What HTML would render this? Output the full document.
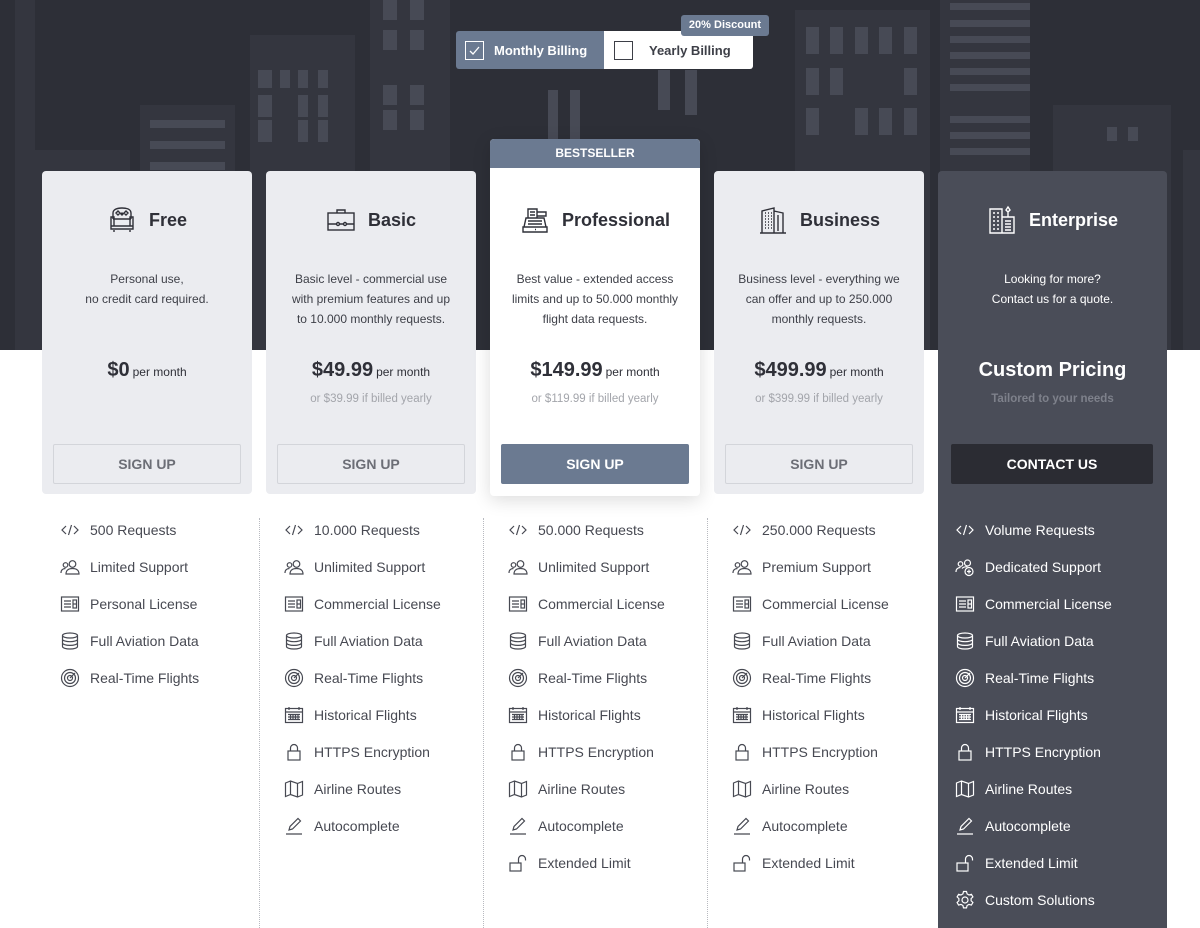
<!DOCTYPE html>
<html><head><meta charset="utf-8">
<style>
*{margin:0;padding:0;box-sizing:border-box}
body{width:1200px;height:928px;position:relative;overflow:hidden;background:#fff;font-family:"Liberation Sans","DejaVu Sans",sans-serif}
.bg{position:absolute;left:0;top:0;width:1200px;height:350px;background:#2d2f37;overflow:hidden}
.b{position:absolute;background:#34363f}
.w{position:absolute;background:#474a55}
.card{position:absolute;top:171px;width:210px;height:323px;background:#ebecf0;border-radius:4px;text-align:center;color:#2f3038}
.title{position:absolute;top:36px;left:0;right:0;height:26px;display:flex;justify-content:center;align-items:center;gap:12px;font-size:18px;font-weight:bold}
.title svg{width:30px;height:30px;fill:none;stroke:currentColor;stroke-width:1.4}
.desc{position:absolute;top:98px;left:8px;right:8px;font-size:12px;line-height:20px;color:#3d3f47}
.price{position:absolute;top:188px;left:0;right:0;font-size:20px;font-weight:bold}
.price small{font-size:12px;font-weight:normal;margin-left:3px}
.sub{position:absolute;top:222px;left:0;right:0;font-size:11.5px;color:#a3a5ab}
.btn{position:absolute;top:273px;left:11px;right:11px;height:40px;border:1px solid #d3d5da;border-radius:2px;font-size:14px;font-weight:bold;color:#6c6e76;line-height:38px}
.feat{position:absolute;top:511px;font-size:14px;color:#474952}
.feat div{height:37px;display:flex;align-items:center}
.feat svg{width:20px;height:20px;margin-right:10px;fill:none;stroke:currentColor;stroke-width:1.2}
.sep{position:absolute;top:518px;height:410px;border-left:1px dotted #b8bac0}
</style></head><body>
<svg width="0" height="0" style="position:absolute">
<defs>
<symbol id="code" viewBox="0 0 20 20"><path d="M6 6L2 10l4 4M14 6l4 4-4 4M11.5 5l-3 10"/></symbol>
<symbol id="users" viewBox="0 0 20 20"><circle cx="12.5" cy="7" r="3.3"/><path d="M6 17c0-4 3-5.5 6.5-5.5S19 13 19 17z"/><circle cx="5.5" cy="8" r="2.3"/><path d="M1 16c0-3 2-4.5 4.5-4.5"/></symbol>
<symbol id="lic" viewBox="0 0 20 20"><rect x="1.5" y="3" width="17" height="14"/><path d="M4 7h7M4 10h7M4 13h7"/><rect x="13" y="6" width="3.5" height="8"/><path d="M13 10h3.5"/></symbol>
<symbol id="db" viewBox="0 0 20 20"><ellipse cx="10" cy="4.5" rx="7.5" ry="2.5"/><path d="M2.5 4.5v11c0 1.4 3.4 2.5 7.5 2.5s7.5-1.1 7.5-2.5v-11M2.5 8.2c0 1.4 3.4 2.5 7.5 2.5s7.5-1.1 7.5-2.5M2.5 11.9c0 1.4 3.4 2.5 7.5 2.5s7.5-1.1 7.5-2.5"/></symbol>
<symbol id="radar" viewBox="0 0 20 20"><circle cx="10" cy="10" r="8.5"/><circle cx="10" cy="10" r="5.5"/><circle cx="10" cy="10" r="2.5"/><path d="M10 10l5-5"/></symbol>
<symbol id="cal" viewBox="0 0 20 20"><rect x="1.5" y="3.5" width="17" height="14"/><path d="M1.5 7h17M5 2v3M15 2v3M4 9.5h12M4 12h12M4 14.5h12M6.5 9v6M9 9v6M11.5 9v6M14 9v6"/></symbol>
<symbol id="lock" viewBox="0 0 20 20"><rect x="4" y="9" width="12" height="9"/><path d="M6.5 9V6a3.5 3.5 0 0 1 7 0v3"/></symbol>
<symbol id="map" viewBox="0 0 20 20"><path d="M1.5 4l5-2 7 2.5 5-2V16l-5 2-7-2.5-5 2zM6.5 2v13.5M13.5 4.5V18"/></symbol>
<symbol id="pen" viewBox="0 0 20 20"><path d="M5 14l1-3.5 8-8 2.5 2.5-8 8zM2 18h16"/></symbol>
<symbol id="unlock" viewBox="0 0 20 20"><rect x="2" y="10" width="11" height="8"/><path d="M10.5 10V6a3.5 3.5 0 0 1 7 0v1.5"/></symbol>
<symbol id="gear" viewBox="0 0 20 20"><circle cx="10" cy="10" r="3"/><path d="M8.5 1.5h3l.6 2.4 1.9 1.1 2.4-.7 1.5 2.6-1.8 1.7v2.2l1.8 1.7-1.5 2.6-2.4-.7-1.9 1.1-.6 2.4h-3l-.6-2.4-1.9-1.1-2.4.7-1.5-2.6 1.8-1.7V8.6L2.1 6.9l1.5-2.6 2.4.7 1.9-1.1z"/></symbol>
<symbol id="users2" viewBox="0 0 20 20"><circle cx="12.5" cy="6" r="3"/><circle cx="5.5" cy="7" r="2.3"/><path d="M1 15c0-3 2-4.5 4.5-4.5M7 11.5c1-1.2 3-1.8 5.5-1.8"/><circle cx="14" cy="14.5" r="4"/><path d="M14 12.5v4M12 14.5h4"/></symbol>
</defs></svg>

<div class="bg">
<div class="b" style="left:15px;top:0;width:20px;height:350px"></div>
<div class="b" style="left:30px;top:150px;width:100px;height:200px"></div>
<div class="b" style="left:140px;top:105px;width:95px;height:245px"></div>
<div class="w" style="left:150px;top:120px;width:75px;height:8px"></div>
<div class="w" style="left:150px;top:141px;width:75px;height:8px"></div>
<div class="w" style="left:150px;top:162px;width:75px;height:8px"></div>
<div class="b" style="left:250px;top:35px;width:105px;height:315px"></div>
<div class="w" style="left:258px;top:70px;width:14px;height:18px"></div><div class="w" style="left:280px;top:70px;width:10px;height:18px"></div><div class="w" style="left:298px;top:70px;width:10px;height:18px"></div><div class="w" style="left:318px;top:70px;width:10px;height:18px"></div>
<div class="w" style="left:258px;top:95px;width:14px;height:22px"></div><div class="w" style="left:298px;top:95px;width:10px;height:22px"></div><div class="w" style="left:318px;top:95px;width:10px;height:22px"></div>
<div class="w" style="left:258px;top:120px;width:14px;height:22px"></div><div class="w" style="left:298px;top:120px;width:10px;height:22px"></div><div class="w" style="left:318px;top:120px;width:10px;height:22px"></div>
<div class="b" style="left:370px;top:0;width:80px;height:350px"></div>
<div class="w" style="left:383px;top:0;width:14px;height:20px"></div><div class="w" style="left:410px;top:0;width:14px;height:20px"></div>
<div class="w" style="left:383px;top:30px;width:14px;height:20px"></div><div class="w" style="left:410px;top:30px;width:14px;height:20px"></div>
<div class="w" style="left:383px;top:85px;width:14px;height:20px"></div><div class="w" style="left:410px;top:85px;width:14px;height:20px"></div>
<div class="w" style="left:383px;top:110px;width:14px;height:20px"></div><div class="w" style="left:410px;top:110px;width:14px;height:20px"></div>
<div class="w" style="left:548px;top:90px;width:10px;height:60px"></div><div class="w" style="left:570px;top:90px;width:10px;height:60px"></div>
<div class="w" style="left:658px;top:70px;width:12px;height:40px"></div><div class="w" style="left:685px;top:70px;width:12px;height:45px"></div>
<div class="b" style="left:795px;top:10px;width:135px;height:340px"></div>
<div class="w" style="left:806px;top:27px;width:13px;height:27px"></div><div class="w" style="left:830px;top:27px;width:13px;height:27px"></div><div class="w" style="left:855px;top:27px;width:13px;height:27px"></div><div class="w" style="left:879px;top:27px;width:13px;height:27px"></div><div class="w" style="left:904px;top:27px;width:13px;height:27px"></div>
<div class="w" style="left:806px;top:68px;width:13px;height:27px"></div><div class="w" style="left:830px;top:68px;width:13px;height:27px"></div><div class="w" style="left:904px;top:68px;width:13px;height:27px"></div>
<div class="w" style="left:806px;top:108px;width:13px;height:27px"></div><div class="w" style="left:855px;top:108px;width:13px;height:27px"></div><div class="w" style="left:879px;top:108px;width:13px;height:27px"></div><div class="w" style="left:904px;top:108px;width:13px;height:27px"></div>
<div class="b" style="left:940px;top:0;width:90px;height:350px"></div>
<div class="w" style="left:950px;top:3px;width:80px;height:7px"></div><div class="w" style="left:950px;top:20px;width:80px;height:7px"></div><div class="w" style="left:950px;top:36px;width:80px;height:7px"></div><div class="w" style="left:950px;top:52px;width:80px;height:7px"></div><div class="w" style="left:950px;top:68px;width:80px;height:7px"></div><div class="w" style="left:950px;top:84px;width:80px;height:7px"></div><div class="w" style="left:950px;top:116px;width:80px;height:7px"></div><div class="w" style="left:950px;top:132px;width:80px;height:7px"></div><div class="w" style="left:950px;top:148px;width:80px;height:7px"></div>
<div class="b" style="left:1053px;top:105px;width:118px;height:245px"></div>
<div class="w" style="left:1107px;top:127px;width:10px;height:14px"></div><div class="w" style="left:1128px;top:127px;width:10px;height:14px"></div>
<div class="b" style="left:1183px;top:150px;width:17px;height:200px"></div>
</div>

<div style="position:absolute;left:456px;top:31px;width:148px;height:38px;background:#6b7a91;border-radius:3px 0 0 3px;color:#fff;font-size:13px;font-weight:bold;display:flex;align-items:center">
<div style="width:19px;height:19px;border:1px solid #fff;margin:0 10px 0 9px;display:flex;align-items:center;justify-content:center"><svg width="13" height="13" viewBox="0 0 13 13"><path d="M2 7l3 3 6-7" fill="none" stroke="#fff" stroke-width="1.3"/></svg></div>Monthly Billing</div>
<div style="position:absolute;left:604px;top:31px;width:149px;height:38px;background:#fff;border-radius:0 3px 3px 0;color:#3d3f47;font-size:13px;font-weight:bold;display:flex;align-items:center">
<div style="width:19px;height:19px;border:1px solid #3d3f47;margin:0 16px 0 10px"></div>Yearly Billing</div>
<div style="position:absolute;left:681px;top:15px;width:88px;height:21px;background:#6b7a91;border-radius:3px;color:#fff;font-size:11px;font-weight:bold;line-height:21px;text-align:center">20% Discount</div>

<!-- Free -->
<div class="card" style="left:42px">
<div class="title"><svg viewBox="0 0 30 30"><path d="M6 14V8c0-3 3-5 9-5s9 2 9 5v6M6 14h18M4 12h3v9H4zM23 12h3v9h-3zM4 21h22v3H4zM7 25v2M23 25v2M11 6l2 2-2 2-2-2zM19 6l2 2-2 2-2-2zM15 8l1 1-1 1-1-1z"/></svg>Free</div>
<div class="desc">Personal use,<br>no credit card required.</div>
<div class="price">$0<small>per month</small></div>
<div class="btn">SIGN UP</div></div>
<!-- Basic -->
<div class="card" style="left:266px">
<div class="title"><svg viewBox="0 0 30 30"><rect x="2" y="8" width="26" height="17"/><path d="M11 8V5h8v3M2 19h8M14 19h3M21 19h7"/><circle cx="12" cy="19" r="1.5"/><circle cx="19" cy="19" r="1.5"/></svg>Basic</div>
<div class="desc">Basic level - commercial use<br>with premium features and up<br>to 10.000 monthly requests.</div>
<div class="price">$49.99<small>per month</small></div>
<div class="sub">or $39.99 if billed yearly</div>
<div class="btn">SIGN UP</div></div>
<!-- Professional -->
<div style="position:absolute;left:490px;top:139px;width:210px;height:357px;background:#fff;border-radius:4px;box-shadow:0 4px 18px rgba(0,0,0,.14)"></div>
<div style="position:absolute;left:490px;top:139px;width:210px;height:29px;background:#6b7a91;border-radius:4px 4px 0 0;color:#fff;font-size:12px;font-weight:bold;text-align:center;line-height:29px">BESTSELLER</div>
<div class="card" style="left:490px;background:transparent">
<div class="title"><svg viewBox="0 0 30 30"><path d="M3 27h24v-5H3zM4 22l2-9h18l2 9M8 13V4h9v9M17 7h9v4h-9M8 16h14M8 19h14M15 24.5h1M10 7h5M10 10h5"/></svg>Professional</div>
<div class="desc">Best value - extended access<br>limits and up to 50.000 monthly<br>flight data requests.</div>
<div class="price">$149.99<small>per month</small></div>
<div class="sub">or $119.99 if billed yearly</div>
<div class="btn" style="background:#6b7a91;border-color:#6b7a91;color:#fff">SIGN UP</div></div>
<!-- Business -->
<div class="card" style="left:714px">
<div class="title"><svg viewBox="0 0 30 30"><path d="M2 28h26M4 28V6l12-3v25M16 6l9 2v20M20 10v16M7 8h1M10 8h1M13 8h1M7 11h1M10 11h1M13 11h1M7 14h1M10 14h1M13 14h1M7 17h1M10 17h1M13 17h1M7 20h1M10 20h1M13 20h1M7 23h1M10 23h1M13 23h1"/></svg>Business</div>
<div class="desc">Business level - everything we<br>can offer and up to 250.000<br>monthly requests.</div>
<div class="price">$499.99<small>per month</small></div>
<div class="sub">or $399.99 if billed yearly</div>
<div class="btn">SIGN UP</div></div>
<!-- Enterprise -->
<div class="card" style="left:938px;width:229px;height:757px;background:#4a4d58;color:#fff;border-radius:4px 4px 0 0">
<div class="title"><svg viewBox="0 0 30 30"><path d="M3 28V4h12v24zM15 28V12h12v16zM21 12V7l-2-2 2-3 2 3-2 2M6 8h2M10 8h2M6 12h2M10 12h2M6 16h2M10 16h2M6 20h2M10 20h2M6 24h2M10 24h2M18 16h6M18 19h6M18 22h6M18 25h6"/></svg>Enterprise</div>
<div class="desc" style="color:#fff">Looking for more?<br>Contact us for a quote.</div>
<div class="price">Custom Pricing</div>
<div class="sub" style="color:#7e818b;font-weight:bold">Tailored to your needs</div>
<div class="btn" style="left:13px;right:14px;background:#2b2c33;border-color:#2b2c33;color:#fff">CONTACT US</div></div>

<div class="sep" style="left:259px"></div>
<div class="sep" style="left:483px"></div>
<div class="sep" style="left:707px"></div>

<div class="feat" style="left:60px">
<div><svg><use href="#code"/></svg>500 Requests</div>
<div><svg><use href="#users"/></svg>Limited Support</div>
<div><svg><use href="#lic"/></svg>Personal License</div>
<div><svg><use href="#db"/></svg>Full Aviation Data</div>
<div><svg><use href="#radar"/></svg>Real-Time Flights</div>
</div>
<div class="feat" style="left:284px">
<div><svg><use href="#code"/></svg>10.000 Requests</div>
<div><svg><use href="#users"/></svg>Unlimited Support</div>
<div><svg><use href="#lic"/></svg>Commercial License</div>
<div><svg><use href="#db"/></svg>Full Aviation Data</div>
<div><svg><use href="#radar"/></svg>Real-Time Flights</div>
<div><svg><use href="#cal"/></svg>Historical Flights</div>
<div><svg><use href="#lock"/></svg>HTTPS Encryption</div>
<div><svg><use href="#map"/></svg>Airline Routes</div>
<div><svg><use href="#pen"/></svg>Autocomplete</div>
</div>
<div class="feat" style="left:508px">
<div><svg><use href="#code"/></svg>50.000 Requests</div>
<div><svg><use href="#users"/></svg>Unlimited Support</div>
<div><svg><use href="#lic"/></svg>Commercial License</div>
<div><svg><use href="#db"/></svg>Full Aviation Data</div>
<div><svg><use href="#radar"/></svg>Real-Time Flights</div>
<div><svg><use href="#cal"/></svg>Historical Flights</div>
<div><svg><use href="#lock"/></svg>HTTPS Encryption</div>
<div><svg><use href="#map"/></svg>Airline Routes</div>
<div><svg><use href="#pen"/></svg>Autocomplete</div>
<div><svg><use href="#unlock"/></svg>Extended Limit</div>
</div>
<div class="feat" style="left:732px">
<div><svg><use href="#code"/></svg>250.000 Requests</div>
<div><svg><use href="#users"/></svg>Premium Support</div>
<div><svg><use href="#lic"/></svg>Commercial License</div>
<div><svg><use href="#db"/></svg>Full Aviation Data</div>
<div><svg><use href="#radar"/></svg>Real-Time Flights</div>
<div><svg><use href="#cal"/></svg>Historical Flights</div>
<div><svg><use href="#lock"/></svg>HTTPS Encryption</div>
<div><svg><use href="#map"/></svg>Airline Routes</div>
<div><svg><use href="#pen"/></svg>Autocomplete</div>
<div><svg><use href="#unlock"/></svg>Extended Limit</div>
</div>
<div class="feat" style="left:955px;color:#fff">
<div><svg><use href="#code"/></svg>Volume Requests</div>
<div><svg><use href="#users2"/></svg>Dedicated Support</div>
<div><svg><use href="#lic"/></svg>Commercial License</div>
<div><svg><use href="#db"/></svg>Full Aviation Data</div>
<div><svg><use href="#radar"/></svg>Real-Time Flights</div>
<div><svg><use href="#cal"/></svg>Historical Flights</div>
<div><svg><use href="#lock"/></svg>HTTPS Encryption</div>
<div><svg><use href="#map"/></svg>Airline Routes</div>
<div><svg><use href="#pen"/></svg>Autocomplete</div>
<div><svg><use href="#unlock"/></svg>Extended Limit</div>
<div><svg><use href="#gear"/></svg>Custom Solutions</div>
</div>
</body></html>
